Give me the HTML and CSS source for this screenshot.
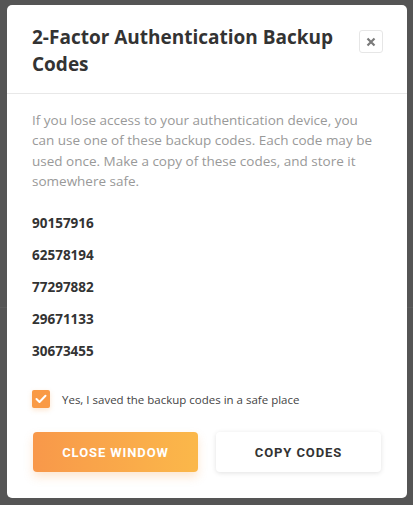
FILE: index.html
```html
<!DOCTYPE html>
<html>
<head>
<meta charset="utf-8">
<link rel="stylesheet" href="styles.css">
</head>
<body>
<div class="backdrop">
  <div class="bg-line"></div>
  <div class="modal">
    <div class="modal-header">
      <h2 class="modal-title">2-Factor Authentication Backup Codes</h2>
      <button class="close-btn" aria-label="Close">
        <svg width="10" height="10" viewBox="0 0 10 10"><path d="M1.5 1.5 L8.5 8.5 M8.5 1.5 L1.5 8.5" stroke="#7a7a7a" stroke-width="2.2" stroke-linecap="butt"/></svg>
      </button>
    </div>
    <div class="modal-body">
      <p class="intro">If you lose access to your authentication device, you can use one of these backup codes. Each code may be used once. Make a copy of these codes, and store it somewhere safe.</p>
      <ul class="codes">
        <li>90157916</li>
        <li>62578194</li>
        <li>77297882</li>
        <li>29671133</li>
        <li>30673455</li>
      </ul>
      <label class="check-row">
        <span class="checkbox">
          <svg width="12" height="10" viewBox="0 0 12 10"><path d="M1.5 5 L4.5 8 L10.5 1.8" fill="none" stroke="#fff" stroke-width="2" stroke-linecap="round" stroke-linejoin="round"/></svg>
        </span>
        <span class="check-label">Yes, I saved the backup codes in a safe place</span>
      </label>
      <div class="actions">
        <button class="btn btn-primary">CLOSE WINDOW</button>
        <button class="btn btn-secondary">COPY CODES</button>
      </div>
    </div>
  </div>
</div>
</body>
</html>
```
FILE: styles.css
```css
html, body {
  margin: 0;
  padding: 0;
  height: 100%;
}
body {
  background: #555555;
  font-family: "Open Sans", "Noto Sans", sans-serif;
}
.backdrop {
  position: relative;
  min-height: 100%;
  padding: 5px 6px 7px 7px;
  box-sizing: border-box;
}
.bg-line {
  position: absolute;
  left: 0;
  right: 0;
  top: 307px;
  height: 1px;
  background: #5c5c5c;
}
.modal {
  position: relative;
  width: 400px;
  height: 493px;
  box-sizing: border-box;
  background: #ffffff;
  border-radius: 5px;
  display: flex;
  flex-direction: column;
}
.modal-header {
  display: flex;
  align-items: flex-start;
  padding: 19px 24px 15px 25px;
  border-bottom: 1px solid #e8e8e8;
}
.modal-title {
  flex: 1;
  margin: 0;
  font-size: 19px;
  line-height: 27px;
  font-weight: 700;
  color: #333333;
  padding-right: 14px;
}
.close-btn {
  margin-top: 6px;
  width: 24px;
  height: 23px;
  padding: 0;
  border: 1px solid #e6e6e6;
  border-radius: 3px;
  background: #fff;
  display: flex;
  align-items: center;
  justify-content: center;
  flex-shrink: 0;
}
.modal-body {
  padding: 16px 24px 0 25px;
}
.intro {
  margin: 0;
  font-size: 13.5px;
  line-height: 20.3px;
  color: #999999;
}
.codes {
  list-style: none;
  margin: 22px 0 0;
  padding: 0;
  display: flex;
  flex-direction: column;
  gap: 12px;
}
.codes li {
  font-size: 13.5px;
  line-height: 20px;
  font-weight: 700;
  color: #333333;
}
.check-row {
  display: flex;
  align-items: center;
  gap: 12px;
  margin-top: 29px;
}
.checkbox {
  width: 18px;
  height: 18px;
  border-radius: 2px;
  background: #f99a45;
  display: flex;
  align-items: center;
  justify-content: center;
  box-shadow: 0 2px 5px rgba(249, 154, 69, 0.25);
}
.check-label {
  font-size: 11.5px;
  color: #444444;
}
.actions {
  display: flex;
  gap: 18px;
  margin-top: 24px;
  padding-left: 1px;
}
.btn {
  width: 165px;
  height: 40px;
  border: none;
  border-radius: 4px;
  font-family: Roboto, "Liberation Sans", sans-serif;
  font-size: 13px;
  font-weight: 700;
  letter-spacing: 0.9px;
  padding: 0;
}
.btn-primary {
  background: linear-gradient(90deg, #f8984a 0%, #fbb84a 100%);
  color: #ffffff;
  box-shadow: 0 5px 10px rgba(249, 160, 74, 0.25);
}
.btn-secondary {
  background: #ffffff;
  color: #333333;
  box-shadow: 0 1px 5px rgba(0, 0, 0, 0.12);
}
```
